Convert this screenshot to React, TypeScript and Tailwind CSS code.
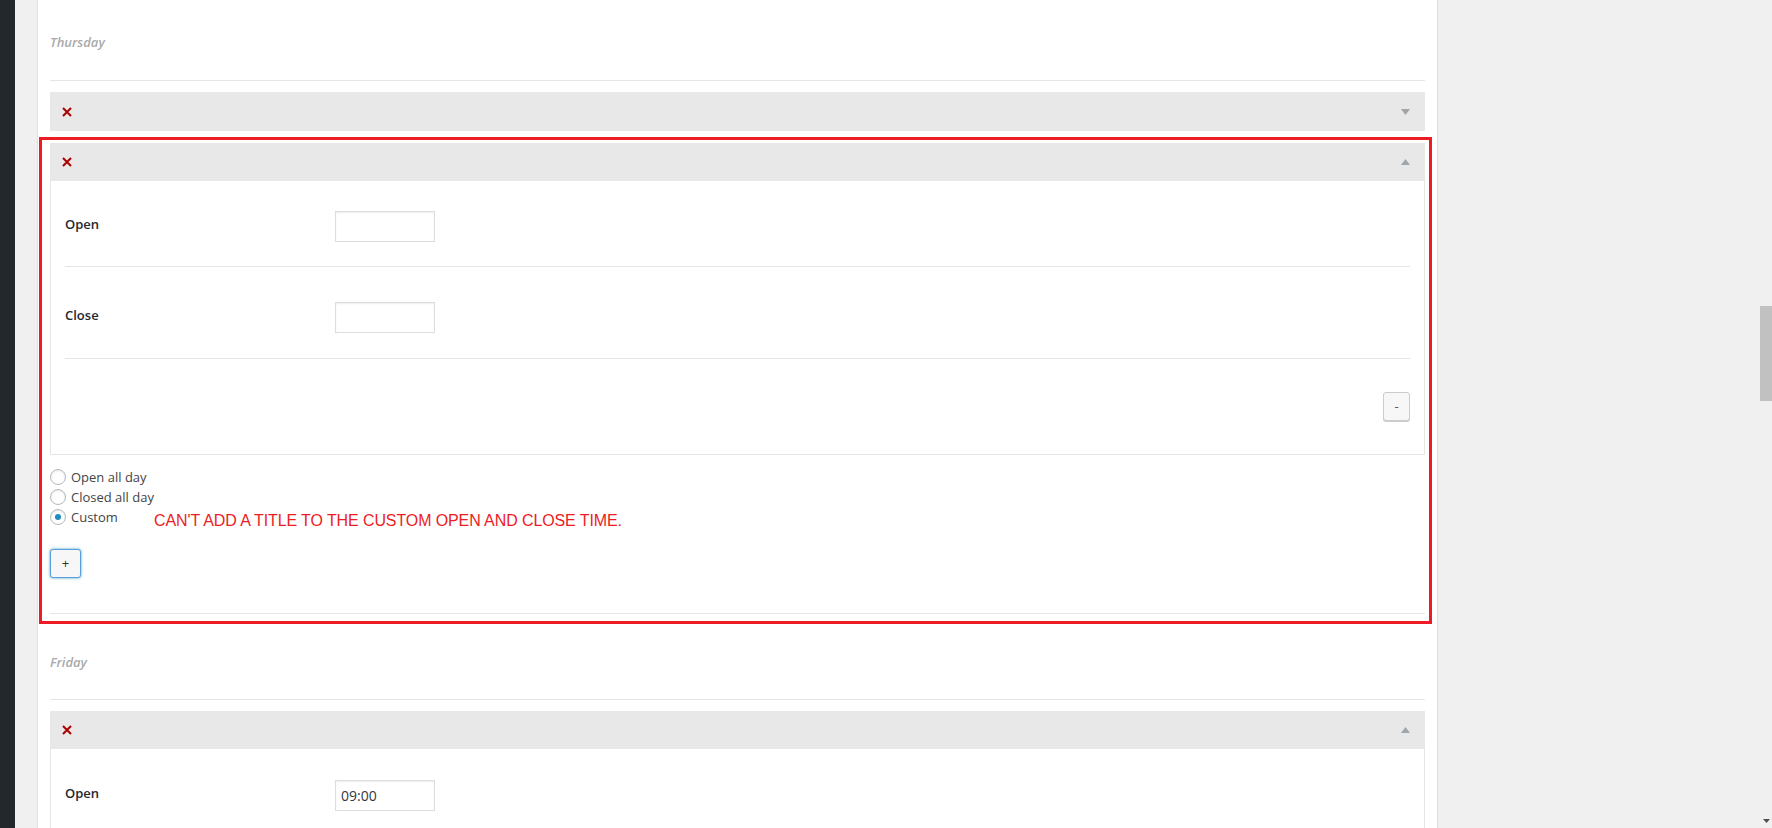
import React from "react";

const XIcon = () => (
  <svg width="10" height="10" viewBox="0 0 10 10" className="block">
    <path d="M1 1L9 9M9 1L1 9" stroke="#aa0000" strokeWidth="2" />
  </svg>
);

const Tri = ({ up }: { up?: boolean }) => (
  <svg width="9" height="6" viewBox="0 0 9 6" className="block">
    {up ? <path d="M0 6L4.5 0L9 6Z" fill="#a0a5aa" /> : <path d="M0 0L9 0L4.5 6Z" fill="#a0a5aa" />}
  </svg>
);

const Header = ({ up, h }: { up?: boolean; h: string }) => (
  <div className={`flex items-center justify-between bg-[#e8e8e8] pl-[12px] pr-[15px] ${h}`}>
    <XIcon />
    <Tri up={up} />
  </div>
);

const TimeInput = ({ value }: { value?: string }) => (
  <div className="h-[31px] w-[100px] border border-[#dddddd] bg-white px-[5px] text-[14px] leading-[29px] text-[#32373c] shadow-[inset_0_1px_2px_rgba(0,0,0,0.07)]">
    {value}
  </div>
);

const Row = ({ label, value, cls }: { label: string; value?: string; cls: string }) => (
  <div className={`flex items-start ${cls}`}>
    <div className="w-[270px] pt-[4px] text-[13px] font-semibold leading-[18px] text-[#23282d]">{label}</div>
    <TimeInput value={value} />
  </div>
);

const Radio = ({ label, checked }: { label: string; checked?: boolean }) => (
  <div className="flex h-[20px] items-center">
    <div className="flex h-[16px] w-[16px] items-center justify-center rounded-full border border-[#b4b9be] bg-white shadow-[inset_0_1px_2px_rgba(0,0,0,0.1)]">
      {checked && <div className="h-[6px] w-[6px] rounded-full bg-[#1e8cbe]" />}
    </div>
    <span className="ml-[5px] text-[13px] leading-[20px] text-[#444444]">{label}</span>
  </div>
);

export default function App() {
  return (
    <div className="flex h-[828px] w-[1772px] overflow-hidden bg-[#f0f0f0]" style={{ fontFamily: '"Open Sans", sans-serif' }}>
      <div className="w-[15px] shrink-0 bg-[#23282d]" />
      <div className="w-[22px] shrink-0" />
      <div className="relative w-[1401px] shrink-0 border-x border-[#e0e0e0] bg-white px-[12px]">
        {/* Thursday */}
        <div className="h-[80px] pt-[33px] text-[13px] font-semibold italic leading-[18px] text-[#aaaaaa]">Thursday</div>
        <div className="h-px bg-[#e5e5e5]" />
        <div className="mt-[11px]">
          <Header h="h-[39px]" />
        </div>
        <div className="mt-[12px]">
          <Header up h="h-[38px]" />
          <div className="border-x border-b border-[#e5e5e5] px-[14px]">
            <Row label="Open" cls="h-[86px] border-b border-[#e5e5e5] pt-[30px]" />
            <Row label="Close" cls="h-[92px] border-b border-[#e5e5e5] pt-[35px]" />
            <div className="flex h-[95px] justify-end pt-[33px]">
              <div className="flex h-[29px] w-[27px] items-center justify-center rounded-[3px] border border-[#cccccc] bg-[#f7f7f7] text-[13px] leading-none text-[#555555] shadow-[0_1px_0_#cccccc]">
                -
              </div>
            </div>
          </div>
        </div>
        <div className="mt-[12px]">
          <Radio label="Open all day" />
          <Radio label="Closed all day" />
          <Radio label="Custom" checked />
        </div>
        <div className="border-b border-[#e5e5e5] pb-[35px] pt-[22px]">
          <div className="flex h-[29px] w-[31px] items-center justify-center rounded-[3px] border border-[#5b9dd9] bg-[#f7f7f7] text-[13px] leading-none text-[#333333] shadow-[0_0_3px_rgba(30,140,190,0.8)]">
            +
          </div>
        </div>
        {/* Friday */}
        <div className="h-[85px] pt-[39px] text-[13px] font-semibold italic leading-[18px] text-[#aaaaaa]">Friday</div>
        <div className="h-px bg-[#e5e5e5]" />
        <div className="mt-[11px]">
          <Header up h="h-[38px]" />
          <div className="h-[200px] border-x border-[#e5e5e5] px-[14px]">
            <Row label="Open" value="09:00" cls="pt-[31px]" />
          </div>
        </div>

        {/* annotation */}
        <div className="pointer-events-none absolute left-[1px] top-[137px] h-[487px] w-[1393px] border-[3px] border-[#ed1c24]" />
        <div
          className="pointer-events-none absolute left-[116px] top-[511px] whitespace-nowrap text-[16px] leading-[20px] tracking-[-0.1px] text-[#ed1c24]"
          style={{ fontFamily: '"Liberation Sans", sans-serif' }}
        >
          CAN'T ADD A TITLE TO THE CUSTOM OPEN AND CLOSE TIME.
        </div>
      </div>
      <div className="flex-1" />
      <div className="flex w-[12px] shrink-0 flex-col items-center">
        <div className="mt-[306px] h-[95px] w-[12px] bg-[#c1c1c1]" />
        <div className="flex-1" />
        <svg width="7" height="4" viewBox="0 0 7 4" className="mb-[5px] block">
          <path d="M0 0L7 0L3.5 4Z" fill="#505050" />
        </svg>
      </div>
    </div>
  );
}
